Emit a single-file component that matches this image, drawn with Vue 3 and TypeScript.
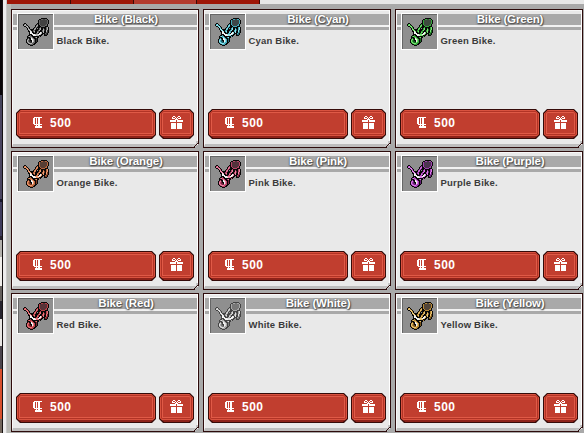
<template>
  <div class="shop">
    <!-- 左侧场景边缘 -->
    <aside class="scene">
      <i v-for="(s, i) in sceneStrips" :key="i" :style="{ height: s.h + 'px', background: s.color }"></i>
    </aside>
    <div class="frame"></div>

    <main class="panel">
      <nav class="tabs">
        <span class="tab first"></span>
        <span class="tab"></span>
        <span class="tab active"></span>
        <span class="tab"></span>
      </nav>

      <div class="grid">
        <article v-for="b in bikes" :key="b.name" class="item">
          <div class="inner">
            <header class="top">
              <div class="thumb">
                <svg class="bike" width="35" height="35" viewBox="0 0 35 35" shape-rendering="crispEdges">
                  <template v-for="(row, y) in sprite" :key="y">
                    <rect v-for="p in row" :key="p.x" :x="p.x + 5" :y="y + 4" :width="p.w" height="1" :fill="paint(p.c, b)" />
                  </template>
                </svg>
              </div>
              <h3 class="title">Bike ({{ b.name }})</h3>
            </header>
            <p class="desc">{{ b.name }} Bike.</p>

            <div class="actions">
              <button class="btn buy">
                <span class="face">
                  <svg width="9" height="11" viewBox="0 0 9 11" shape-rendering="crispEdges">
                    <template v-for="(row, y) in coin" :key="y">
                      <rect v-for="p in row" :key="p.x" :x="p.x" :y="y" :width="p.w" height="1" fill="#fff" />
                    </template>
                  </svg>
                  <span class="price">500</span>
                </span>
              </button>
              <button class="btn gift">
                <span class="face">
                  <svg width="13" height="13" viewBox="0 0 13 13" shape-rendering="crispEdges">
                    <template v-for="(row, y) in present" :key="y">
                      <rect v-for="p in row" :key="p.x" :x="p.x" :y="y" :width="p.w" height="1" fill="#fff" />
                    </template>
                  </svg>
                </span>
              </button>
            </div>
          </div>
          <svg class="corner" width="7" height="7" viewBox="0 0 7 7" shape-rendering="crispEdges">
            <path fill="#a9a9a9" d="M7 2v5H2z" />
            <path fill="#c4c4c4" d="M6 0v2L2 6H0V4h2l2-2V0z" />
            <path fill="#2d0b0b" d="M6 0h1v2H6v1H5v1H4v1H3v1H2v1H0V6h2V5h1V4h1V3h1V2h1z" />
          </svg>
        </article>
      </div>
    </main>
  </div>
</template>

<script setup lang="ts">
type Bike = { name: string; light: string; mid: string; dark: string; seat: string }
type Run = { x: number; w: number; c: string }

const bikes: Bike[] = [
  { name: 'Black',  light: '#b5b5b5', mid: '#666666', dark: '#363636', seat: '#424242' },
  { name: 'Cyan',   light: '#8ee4ee', mid: '#43a8b8', dark: '#206571', seat: '#3d4749' },
  { name: 'Green',  light: '#79e473', mid: '#35a43b', dark: '#1b6424', seat: '#3e4a3e' },
  { name: 'Orange', light: '#ed9b70', mid: '#b8653e', dark: '#7c3920', seat: '#573d33' },
  { name: 'Pink',   light: '#ed86a5', mid: '#b94468', dark: '#792541', seat: '#53323c' },
  { name: 'Purple', light: '#dc7ce8', mid: '#9f3fb0', dark: '#642272', seat: '#4b3450' },
  { name: 'Red',    light: '#e9777d', mid: '#b94047', dark: '#792127', seat: '#573338' },
  { name: 'White',  light: '#dddddd', mid: '#a8a8a8', dark: '#777777', seat: '#777777' },
  { name: 'Yellow', light: '#e8c373', mid: '#b88a36', dark: '#79561f', seat: '#514438' },
]

/* k 描边  l 亮  m 中  d 暗  s 座垫  w 高光 */
const sprite = toRuns([
  '..................kkkkkk..',
  '................kkmmssmmk.',
  '...............kmsssssssmk',
  '...............kmsssssssmk',
  '...............kmsssssssmk',
  '.kk...........kkmsssssssmk',
  'kmlk.........kmkmssssssmk.',
  'kllmk.......kmlkkmssssmmk.',
  '.kkllk......klmkkkmmmmkkk.',
  '...klmk....kmmkkkmkkkkkmlk',
  '....klk...kmlk.kmlkkmkkmlk',
  '....kllkkkklmkkkmlkkldkmlk',
  '.....kllkkmmkkkmlkkmldkldk',
  '.....kkwlkmlkkmmkkkmlkkldk',
  '......kwwkkmkklmkwlklkkmdk',
  '......kwwwkkkmmkwwlkkkmdk.',
  '......kkkwwwlllwwlkk.kddk.',
  '.....kkmkkwwwlllkkk..kkk..',
  '....kmlmmkkkkkkkmk........',
  '....kkkmlmkkmlkk..........',
  '....kmkkwlmkkdk...........',
  '...kmldkwwlmkdk...........',
  '...klmdkkwlmkdk...........',
  '...klmddkwlmkdk...........',
  '...kmlmddlmmkk............',
  '....kmlllmmkk.............',
  '.....kkmmmkk..............',
  '.......kkk................',
])

const coin = toRuns([
  '.########',
  '##.#.##..',
  '##.#.##..',
  '##.#.##..',
  '##.#.##..',
  '##.#.##..',
  '##.#.##..',
  '.########',
  '...#.##..',
  '..#######',
  '..#######',
])

const present = toRuns([
  '...##...##...',
  '..#..#.#..#..',
  '..###.#.###..',
  '.....###.....',
  '######.######',
  '######.######',
  '.............',
  '.#####.#####.',
  '.#####.#####.',
  '.#####.#####.',
  '.#####.#####.',
  '.#####.#####.',
  '.#####.#####.',
])

// 相邻同色像素合并成一段
function toRuns(lines: string[]): Run[][] {
  return lines.map(line => {
    const row: Run[] = []
    for (let x = 0; x < line.length; x++) {
      const c = line[x]
      if (c === '.') continue
      const last = row[row.length - 1]
      if (last && last.c === c && last.x + last.w === x) last.w++
      else row.push({ x, w: 1, c })
    }
    return row
  })
}

function paint(c: string, b: Bike) {
  const map: Record<string, string> = { k: b.name === 'White' ? '#444444' : '#080808', w: '#f3f3f3', l: b.light, m: b.mid, d: b.dark, s: b.seat }
  return map[c]
}

const sceneStrips = [
  { h: 95, color: '#080507' },
  { h: 13, color: '#45455b' },
  { h: 91, color: '#4b4660' },
  { h: 3,  color: '#17172a' },
  { h: 34, color: '#403d5c' },
  { h: 4,  color: '#2a2430' },
  { h: 17, color: '#b4b2ad' },
  { h: 29, color: '#f0eeeb' },
  { h: 15, color: '#66615e' },
  { h: 18, color: '#26242e' },
  { h: 27, color: '#e9e7e4' },
  { h: 23, color: '#4b454c' },
  { h: 50, color: '#d8502d' },
  { h: 14, color: '#72665c' },
]
</script>

<style>
body{margin:0;overflow:hidden}
</style>

<style scoped>
.shop{display:flex;width:584px;height:433px;overflow:hidden;background:#a9a9a9;font-family:"Liberation Sans",Arial,sans-serif}
.scene{width:2px;flex:none;border-right:1px solid #171313}
.scene i{display:block}
.frame{box-sizing:border-box;width:4px;flex:none;background:#ececec;border-right:1px solid #c9c9c9}
.panel{flex:1;min-width:0;background:linear-gradient(90deg,#b9bab5 4px,#a9a9a9 4px)}

/* 顶部标签 */
.tabs{display:flex;height:4px;background:#e7e7e7}
.tab{box-sizing:border-box;width:63px;background:#9e1708;border-right:1px solid #3b0805}
.tab.first{width:64px}
.tab.active{background:#b33a2e}

/* 商品网格 */
.grid{display:grid;grid-template-columns:repeat(3,188px);grid-auto-rows:139px;gap:3px 4px;padding:5px 0 0 4px}
.item{box-sizing:border-box;position:relative;border:1px solid #2d0b0b;background:#e9e9e9}
.inner{box-sizing:border-box;height:137px;border:1px solid #f7f7f7;border-right-color:#fff;border-bottom:3px solid #bdbdbd;padding-top:3px}
.corner{position:absolute;right:-1px;bottom:-1px}

.top{display:flex;height:35px;padding-left:4px;background:linear-gradient(#a9a9a9 11px,#f2f2f2 11px,#f2f2f2 13px,#a9a9a9 13px,#a9a9a9 16px,transparent 16px)}
.thumb{box-sizing:border-box;width:37px;height:37px;margin-top:-1px;flex:none;border:1px solid #fff;background:#8f8f8f;box-shadow:inset 1px 1px #666}
.bike{display:block}
.title{flex:1;margin:0;padding-left:1px;text-align:center;font-size:11.5px;line-height:11px;font-weight:700;color:#fff;letter-spacing:-.15px;text-shadow:0 0 1px #555,1px 1px 1px #555,0 1px 2px #555}
.desc{margin:-15px 0 0 43.5px;height:14px;font-size:9.5px;line-height:14px;font-weight:700;color:#3b3b3b;letter-spacing:.2px}

/* 按钮 */
.actions{display:flex;gap:3px;padding:61px 0 0 3px}
.btn{box-sizing:border-box;height:30px;padding:1px;border:0;background:#350b09;font-family:inherit;
  clip-path:polygon(4px 0,calc(100% - 4px) 0,100% 4px,100% calc(100% - 4px),calc(100% - 4px) 100%,4px 100%,0 calc(100% - 4px),0 4px)}
.buy{width:140px}
.gift{width:35px}
.face{display:flex;box-sizing:border-box;height:28px;align-items:center;background:#c13e2f;border-bottom:2px solid #8e2219;border-radius:4px;
  box-shadow:inset 0 0 0 1px #d9523f,inset 0 0 0 2px #b23325,inset 0 0 0 3px #e05a47;
  clip-path:polygon(4px 0,calc(100% - 4px) 0,100% 4px,100% calc(100% - 4px),calc(100% - 4px) 100%,4px 100%,0 calc(100% - 4px),0 4px)}
.buy .face{padding-left:16px;gap:8px}
.gift .face{justify-content:center}
.buy svg{margin-bottom:2px}
.gift svg{margin-bottom:1px}
.price{color:#fff;font-size:12px;font-weight:700;letter-spacing:.5px}
</style>
